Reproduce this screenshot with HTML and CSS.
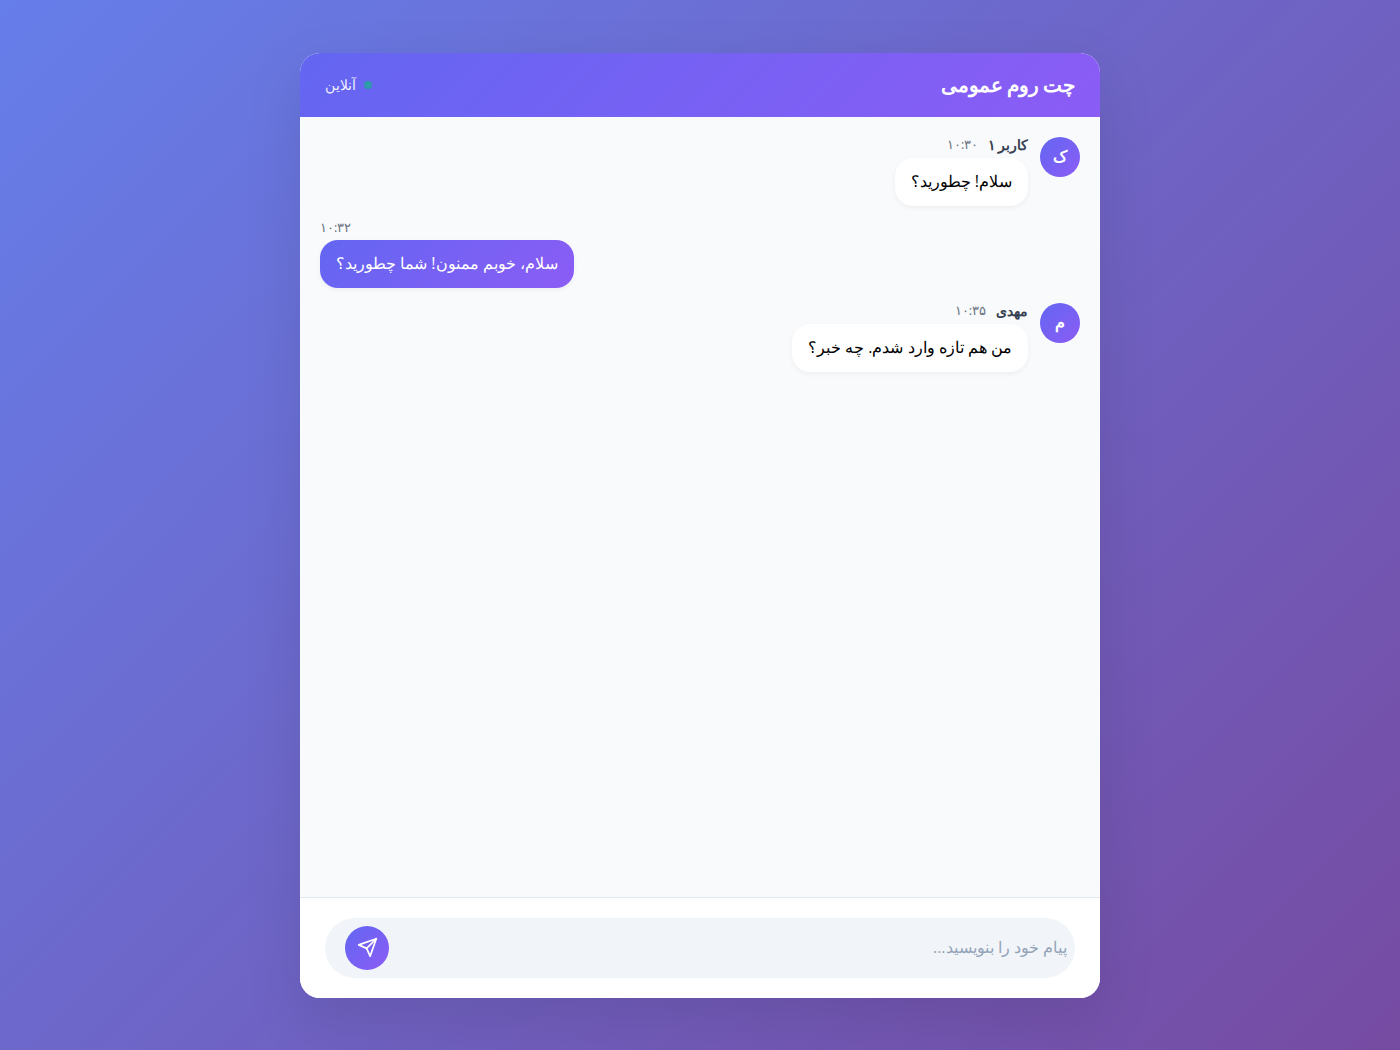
FILE: index.html
```html
<!DOCTYPE html>
<html lang="fa" dir="rtl">
<head>
<meta charset="utf-8">
<title>چت روم عمومی</title>
<link rel="stylesheet" href="styles.css">
</head>
<body>
<main class="chat">
  <header class="chat-header">
    <h1 class="chat-title">چت روم عمومی</h1>
    <div class="status"><span class="status-dot"></span><span>آنلاین</span></div>
  </header>
  <section class="messages">
    <article class="message">
      <div class="avatar">ک</div>
      <div class="message-body">
        <div class="meta"><span class="name">کاربر ۱</span><span class="time">۱۰:۳۰</span></div>
        <div class="bubble">سلام! چطورید؟</div>
      </div>
    </article>
    <article class="message own">
      <div class="message-body">
        <div class="meta"><span class="time">۱۰:۳۲</span></div>
        <div class="bubble">سلام، خوبم ممنون! شما چطورید؟</div>
      </div>
    </article>
    <article class="message">
      <div class="avatar">م</div>
      <div class="message-body">
        <div class="meta"><span class="name">مهدی</span><span class="time">۱۰:۳۵</span></div>
        <div class="bubble">من هم تازه وارد شدم. چه خبر؟</div>
      </div>
    </article>
  </section>
  <footer class="composer">
    <div class="composer-box">
      <input class="composer-input" type="text" placeholder="پیام خود را بنویسید...">
      <button class="send" type="button" aria-label="ارسال">
        <svg viewBox="0 0 24 24" width="21" height="21" fill="none" stroke="currentColor" stroke-width="2" stroke-linecap="round" stroke-linejoin="round"><line x1="22" y1="2" x2="11" y2="13"></line><polygon points="22 2 15 22 11 13 2 9 22 2"></polygon></svg>
      </button>
    </div>
  </footer>
</main>
</body>
</html>
```
FILE: styles.css
```css
* { box-sizing: border-box; margin: 0; padding: 0; }
html, body { height: 100%; }
body {
  font-family: "Open Sans", sans-serif;
  background: linear-gradient(135deg, #667eea 0%, #764ba2 100%);
  display: flex;
  align-items: center;
  justify-content: center;
  height: 1050px;
  overflow: hidden;
}
.chat {
  width: 800px;
  height: 945px;
  background: #fff;
  border-radius: 20px;
  overflow: hidden;
  display: flex;
  flex-direction: column;
  box-shadow: 0 20px 60px rgba(0, 0, 0, 0.1);
}
.chat-header {
  height: 64px;
  flex: none;
  padding: 0 25px;
  display: flex;
  align-items: center;
  justify-content: space-between;
  color: #fff;
  background: linear-gradient(135deg, #6366f1 0%, #8b5cf6 100%);
}
.chat-title { font-size: 20px; line-height: 24px; font-weight: 700; word-spacing: -1px; }
.status { display: flex; align-items: center; gap: 8px; font-size: 14px; line-height: 16px; opacity: 0.9; }
.status-dot { width: 8px; height: 8px; border-radius: 50%; background: #10b981; opacity: 0.7; }
.messages {
  flex: 1;
  background: #f8fafc;
  padding: 20px;
  display: flex;
  flex-direction: column;
  gap: 15px;
}
.message { display: flex; gap: 12px; }
.message.own { justify-content: flex-end; }
.avatar {
  width: 40px;
  height: 40px;
  flex: none;
  border-radius: 50%;
  display: flex;
  align-items: center;
  justify-content: center;
  padding-bottom: 2px;
  color: #fff;
  font-weight: 700;
  font-size: 16px;
  line-height: 18px;
  background: linear-gradient(135deg, #6366f1 0%, #8b5cf6 100%);
}
.message-body { display: flex; flex-direction: column; align-items: flex-start; }
.own .message-body { align-items: flex-end; }
.meta { display: flex; align-items: center; gap: 10px; margin-bottom: 5px; }
.name { font-size: 14px; line-height: 16px; font-weight: 700; color: #374151; word-spacing: -2px; }
.time { font-size: 12.5px; line-height: 14px; color: #6b7280; }
.bubble {
  padding: 11px 16px 13px;
  font-size: 16px;
  line-height: 24px;
  border-radius: 18px;
  background: #fff;
  color: #000;
  box-shadow: 0 2px 5px rgba(0, 0, 0, 0.05);
}
.own .bubble { color: #fff; background: linear-gradient(135deg, #6366f1 0%, #8b5cf6 100%); }
.composer { flex: none; height: 101px; padding: 20px 25px; background: #fff; border-top: 1px solid #e2e8f0; }
.composer-box {
  height: 60px;
  display: flex;
  align-items: center;
  background: #f1f5f9;
  border-radius: 30px;
  padding: 0 8px 0 20px;
}
.composer-input {
  flex: 1;
  border: 0;
  outline: 0;
  background: transparent;
  font: 16px "Open Sans", sans-serif;
  line-height: 20px;
  padding-bottom: 2px;
  color: #000;
}
.composer-input::placeholder { color: #94a3b8; }
.send {
  width: 44px;
  height: 44px;
  flex: none;
  border: 0;
  border-radius: 50%;
  display: flex;
  align-items: center;
  justify-content: center;
  color: #fff;
  background: linear-gradient(135deg, #6366f1 0%, #8b5cf6 100%);
}
```
